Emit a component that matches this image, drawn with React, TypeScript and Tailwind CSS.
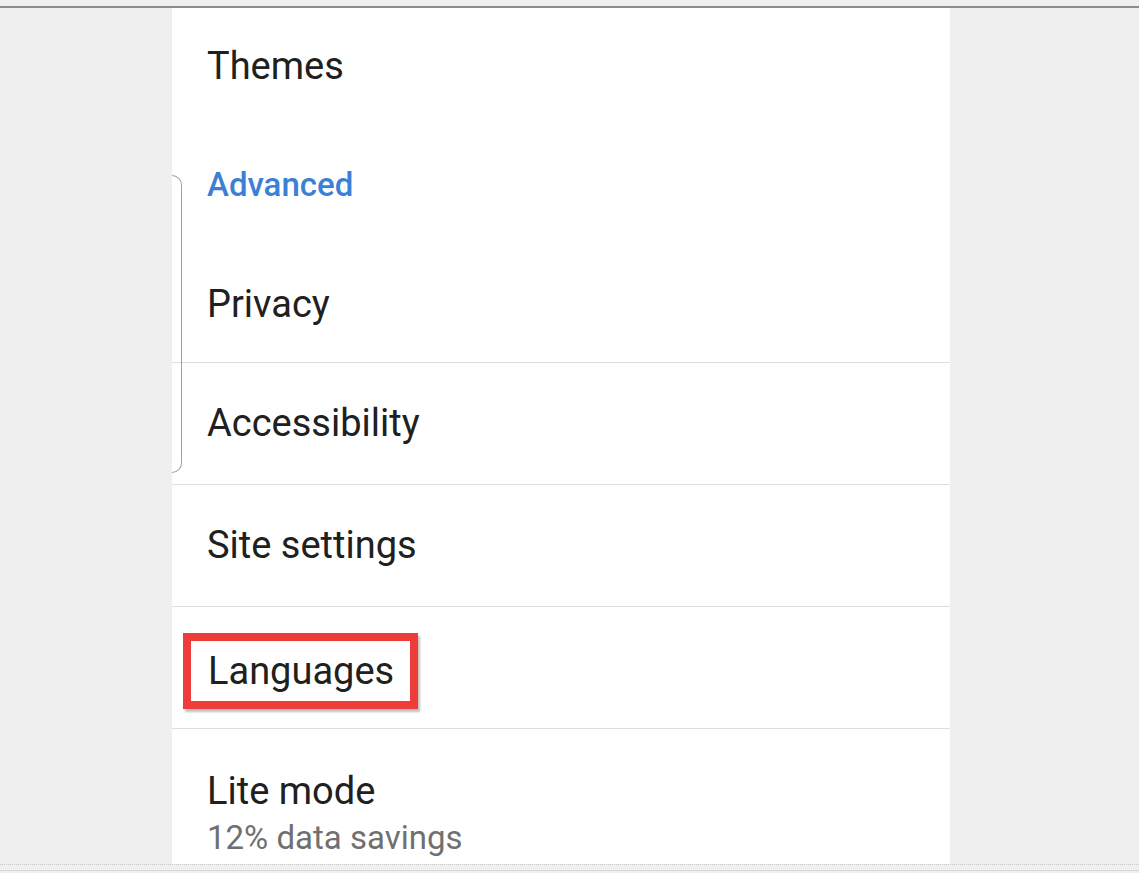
import React from 'react';

const font = { fontFamily: 'Roboto, "Noto Sans", Arial, sans-serif' };

const rows = ['Privacy', 'Accessibility', 'Site settings'];

export default function App() {
  return (
    <div className="flex h-[873px] w-full flex-col overflow-hidden bg-[#efefef]" style={font}>
      {/* top strip */}
      <div className="h-[6px] bg-[#f0f0f0]" />
      <div className="h-[2px] bg-[#8c8c8c]" />

      <div className="flex flex-1">
        <div className="w-[172px] shrink-0" />

        {/* settings panel */}
        <div className="relative flex w-[778px] shrink-0 flex-col bg-white">
          <div className="flex h-[116px] items-center pl-[35px] text-[38px] text-[#202020]">
            Themes
          </div>
          <div className="flex h-[122px] items-center pl-[35px] text-[33px] font-medium text-[#3c7fd6]">
            Advanced
          </div>

          {rows.map((r, i) => (
            <div
              key={r}
              className={
                i === 0
                  ? 'flex h-[117px] items-center border-b border-[#dedede] pl-[35px] text-[38px] text-[#202020]'
                  : 'flex h-[122px] items-center border-b border-[#dedede] pl-[35px] text-[38px] text-[#202020]'
              }
            >
              {r}
            </div>
          ))}

          <div className="flex h-[122px] items-center border-b border-[#dedede] pl-[11px] pt-[6px] text-[38px] text-[#202020]">
            <div className="border-[8px] border-[#f03b3b] py-[8px] pl-[17px] pr-[16px] shadow-[2px_3px_2px_rgba(0,0,0,0.25)]">
              <div className="leading-[44px]">Languages</div>
            </div>
          </div>

          <div className="flex flex-1 flex-col pl-[35px] pt-[40px]">
            <div className="text-[38px] leading-[44px] text-[#202020]">Lite mode</div>
            <div className="mt-[6px] text-[33px] leading-[38px] text-[#707070]">12% data savings</div>
          </div>

          {/* edge bracket */}
          <div className="absolute left-0 top-[167px] h-[298px] w-[10px] rounded-r-[10px] border-y border-r border-[#a0a0a0]" />
        </div>

        <div className="flex-1" />
      </div>

      {/* bottom strip */}
      <div className="h-[9px] border-t border-dotted border-[#c8c8c8] bg-[#efefef]">
        <div className="mt-[5px] h-px bg-[#d6d6d6]" />
      </div>
    </div>
  );
}
